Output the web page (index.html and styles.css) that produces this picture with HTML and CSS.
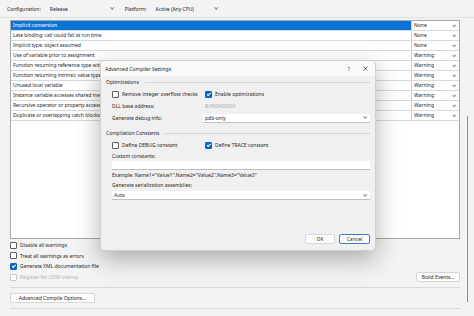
FILE: index.html
```html
<!DOCTYPE html>
<html lang="en">
<head>
  <meta charset="UTF-8" />
  <title>Compile</title>
  <link rel="stylesheet" href="styles.css">
</head>
<body>
  <div class="toolbar">
    <span class="tb-label">Configuration:</span>
    <div class="combo combo-config"><span>Release</span><i class="chev"></i></div>
    <span class="tb-label">Platform:</span>
    <div class="combo combo-platform"><span>Active (Any CPU)</span><i class="chev"></i></div>
  </div>

  <div class="content">
    <div class="warnings">
      <div class="row selected"><span class="name">Implicit conversion</span><span class="level">None<i class="chev"></i></span></div>
      <div class="row"><span class="name">Late binding; call could fail at run time</span><span class="level">None<i class="chev"></i></span></div>
      <div class="row"><span class="name">Implicit type; object assumed</span><span class="level">None<i class="chev"></i></span></div>
      <div class="row"><span class="name">Use of variable prior to assignment</span><span class="level">Warning<i class="chev"></i></span></div>
      <div class="row"><span class="name">Function returning reference type without return value</span><span class="level">Warning<i class="chev"></i></span></div>
      <div class="row"><span class="name">Function returning intrinsic value type without return value</span><span class="level">Warning<i class="chev"></i></span></div>
      <div class="row"><span class="name">Unused local variable</span><span class="level">Warning<i class="chev"></i></span></div>
      <div class="row"><span class="name">Instance variable accesses shared member</span><span class="level">Warning<i class="chev"></i></span></div>
      <div class="row"><span class="name">Recursive operator or property access</span><span class="level">Warning<i class="chev"></i></span></div>
      <div class="row"><span class="name">Duplicate or overlapping catch blocks</span><span class="level">Warning<i class="chev"></i></span></div>
    </div>

    <div class="checks-row">
      <div class="checks">
        <label class="check"><span class="box"></span>Disable all warnings</label>
        <label class="check"><span class="box"></span>Treat all warnings as errors</label>
        <label class="check"><span class="box on"></span>Generate XML documentation file</label>
        <label class="check disabled"><span class="box"></span>Register for COM interop</label>
      </div>
      <button class="btn btn-build">Build Events...</button>
    </div>
    <div class="sep"></div>
    <button class="btn btn-advanced">Advanced Compile Options...</button>
    <div class="sep"></div>
  </div>

  <div class="scrollbar"></div>

  <div class="dialog">
    <div class="dlg-title">
      <span class="dlg-caption">Advanced Compiler Settings</span>
      <span class="dlg-help">?</span>
      <svg class="dlg-close" width="5" height="5" viewBox="0 0 5 5"><path d="M0.5 0.5L4.5 4.5M4.5 0.5L0.5 4.5" stroke="#333" stroke-width="0.7" fill="none"/></svg>
    </div>
    <div class="dlg-body">
      <div class="group"><span>Optimizations</span><i></i></div>
      <div class="field">
        <label class="check"><span class="box"></span>Remove integer overflow checks</label>
        <label class="check col2"><span class="box on"></span>Enable optimizations</label>
      </div>
      <div class="field">
        <span class="lbl">DLL base address:</span>
        <span class="col2 muted">&amp;H00400000</span>
      </div>
      <div class="field">
        <span class="lbl">Generate debug info:</span>
        <div class="select select-debug"><span>pdb-only</span><i class="chev"></i></div>
      </div>

      <div class="group group-const"><span>Compilation Constants</span><i></i></div>
      <div class="field">
        <label class="check"><span class="box"></span>Define DEBUG constant</label>
        <label class="check col2"><span class="box on"></span>Define TRACE constant</label>
      </div>
      <div class="line">Custom constants:</div>
      <div class="textbox"></div>
      <div class="line">Example: Name1="Value1",Name2="Value2",Name3="Value3"</div>
      <div class="line">Generate serialization assemblies:</div>
      <div class="select select-wide"><span>Auto</span><i class="chev"></i></div>
    </div>
    <div class="dlg-footer">
      <button class="btn dlg-btn">OK</button>
      <button class="btn dlg-btn default">Cancel</button>
    </div>
  </div>
</body>
</html>
```

FILE: styles.css
```css
body {
  margin: 0;
  width: 474px;
  height: 316px;
  overflow: hidden;
  position: relative;
  background: #f3f3f3;
  font-family: "Noto Sans", "Open Sans", sans-serif;
  font-size: 5px;
  color: #1f1f1f;
}

button {
  font-family: inherit;
  font-size: inherit;
  color: inherit;
}

/* small down chevron used by combos */
.chev {
  display: inline-block;
  width: 1.6px;
  height: 1.6px;
  border-right: 0.7px solid #8a8a8a;
  border-bottom: 0.7px solid #8a8a8a;
  transform: translateY(-1px) rotate(45deg);
  flex-shrink: 0;
}

/* top bar */
.toolbar {
  height: 17px;
  display: flex;
  align-items: center;
  padding-left: 7px;
  border-bottom: 1px solid #e2e2e2;
}

.tb-label {
  margin-right: 6px;
}

.combo {
  height: 10px;
  display: flex;
  align-items: center;
  justify-content: space-between;
  padding: 0 3px;
  box-sizing: border-box;
  margin-right: 8px;
}

.combo-config {
  width: 70px;
}

.combo-platform {
  width: 68px;
}

/* main content */
.content {
  padding: 2px 14px 0 10px;
}

.warnings {
  height: 219px;
  box-sizing: border-box;
  border: 1px solid #a8a8a8;
  background: #fff;
}

.row {
  height: 10px;
  display: flex;
  border-bottom: 1px solid #dadada;
  box-sizing: border-box;
}

.row .name {
  flex: 1;
  padding-left: 2px;
  line-height: 9px;
  white-space: nowrap;
  overflow: hidden;
  letter-spacing: -0.03px;
}

.row .level {
  width: 42px;
  border-left: 1px solid #cfcfcf;
  padding: 0 3px 0 2px;
  line-height: 9px;
  display: flex;
  align-items: center;
  justify-content: space-between;
  background: #fff;
}

.row .level .chev {
  transform: translateY(-0.5px) rotate(45deg);
}

.row.selected .name {
  background: #0a74d6;
  color: #fff;
}

.checks-row {
  display: flex;
  align-items: flex-end;
  justify-content: space-between;
}

.checks {
  padding-top: 1px;
}

.check {
  display: flex;
  align-items: center;
  height: 10.6px;
  white-space: nowrap;
}

.box {
  position: relative;
  width: 5px;
  height: 5px;
  border: 1px solid #5c5c5c;
  border-radius: 1px;
  margin-right: 3px;
  background: #fff;
  flex-shrink: 0;
}

.box.on {
  background: #0a67c2;
  border-color: #0a67c2;
}

.box.on::after {
  content: "";
  position: absolute;
  left: 1.6px;
  top: 0.3px;
  width: 1.2px;
  height: 2.6px;
  border-right: 0.8px solid #fff;
  border-bottom: 0.8px solid #fff;
  transform: rotate(45deg);
}

.check.disabled {
  color: #b4b4b4;
}

.check.disabled .box {
  border-color: #c8c8c8;
}

.btn {
  height: 10px;
  padding: 0;
  background: #fdfdfd;
  border: 1px solid #d6d6d6;
  border-radius: 2px;
  line-height: 8px;
}

.btn-build {
  width: 44px;
}

.btn-advanced {
  width: 85px;
  margin-top: 5px;
  display: block;
}

.sep {
  height: 1px;
  background: #d8d8d8;
  margin-top: 5px;
}

.scrollbar {
  position: absolute;
  left: 467px;
  top: 116px;
  width: 1px;
  height: 186px;
  background: #8f8f8f;
}

/* dialog */
.dialog {
  position: absolute;
  left: 100px;
  top: 60px;
  width: 276px;
  height: 191px;
  box-sizing: border-box;
  background: #f0f0f0;
  border: 1px solid #cfcfcf;
  border-radius: 4px;
  box-shadow: 0 8px 24px rgba(0, 0, 0, 0.3);
  display: flex;
  flex-direction: column;
}

.dlg-title {
  height: 15px;
  display: flex;
  align-items: center;
  padding: 0 7px 0 4px;
  background: #f9f9f9;
  border-radius: 4px 4px 0 0;
}

.dlg-caption {
  flex: 1;
}

.dlg-help {
  margin-right: 13px;
}

.dlg-body {
  flex: 1;
  padding: 0 5px 0 5px;
}

.group {
  height: 12px;
  display: flex;
  align-items: center;
}

.group i {
  flex: 1;
  height: 1px;
  background: #d4d4d4;
  margin-left: 6px;
}

.group-const {
  margin-top: 3px;
}

.field {
  height: 12px;
  display: flex;
  align-items: center;
  padding-left: 6px;
}

.field .check,
.field .lbl {
  width: 93px;
}

.muted {
  color: #a8a8a8;
}

.select {
  height: 9px;
  background: #fff;
  border-bottom: 1px solid #c0c0c0;
  display: flex;
  align-items: center;
  justify-content: space-between;
  padding: 0 3px 0 2px;
  box-sizing: border-box;
}

.select-debug {
  flex: 1;
  margin-left: -2px;
}

.select-wide {
  margin: 1px 0 0 6px;
}

.line {
  padding-left: 6px;
  height: 10px;
  line-height: 10px;
  white-space: nowrap;
}

.textbox {
  height: 9px;
  margin-left: 6px;
  background: #fff;
  border-bottom: 1px solid #c0c0c0;
  box-sizing: border-box;
}

.dlg-footer {
  display: flex;
  justify-content: flex-end;
  gap: 4px;
  padding: 0 5px 6px 0;
}

.dlg-btn {
  width: 30px;
}

.dlg-btn.default {
  width: 31px;
  border-color: #3c7fd0;
}
```
